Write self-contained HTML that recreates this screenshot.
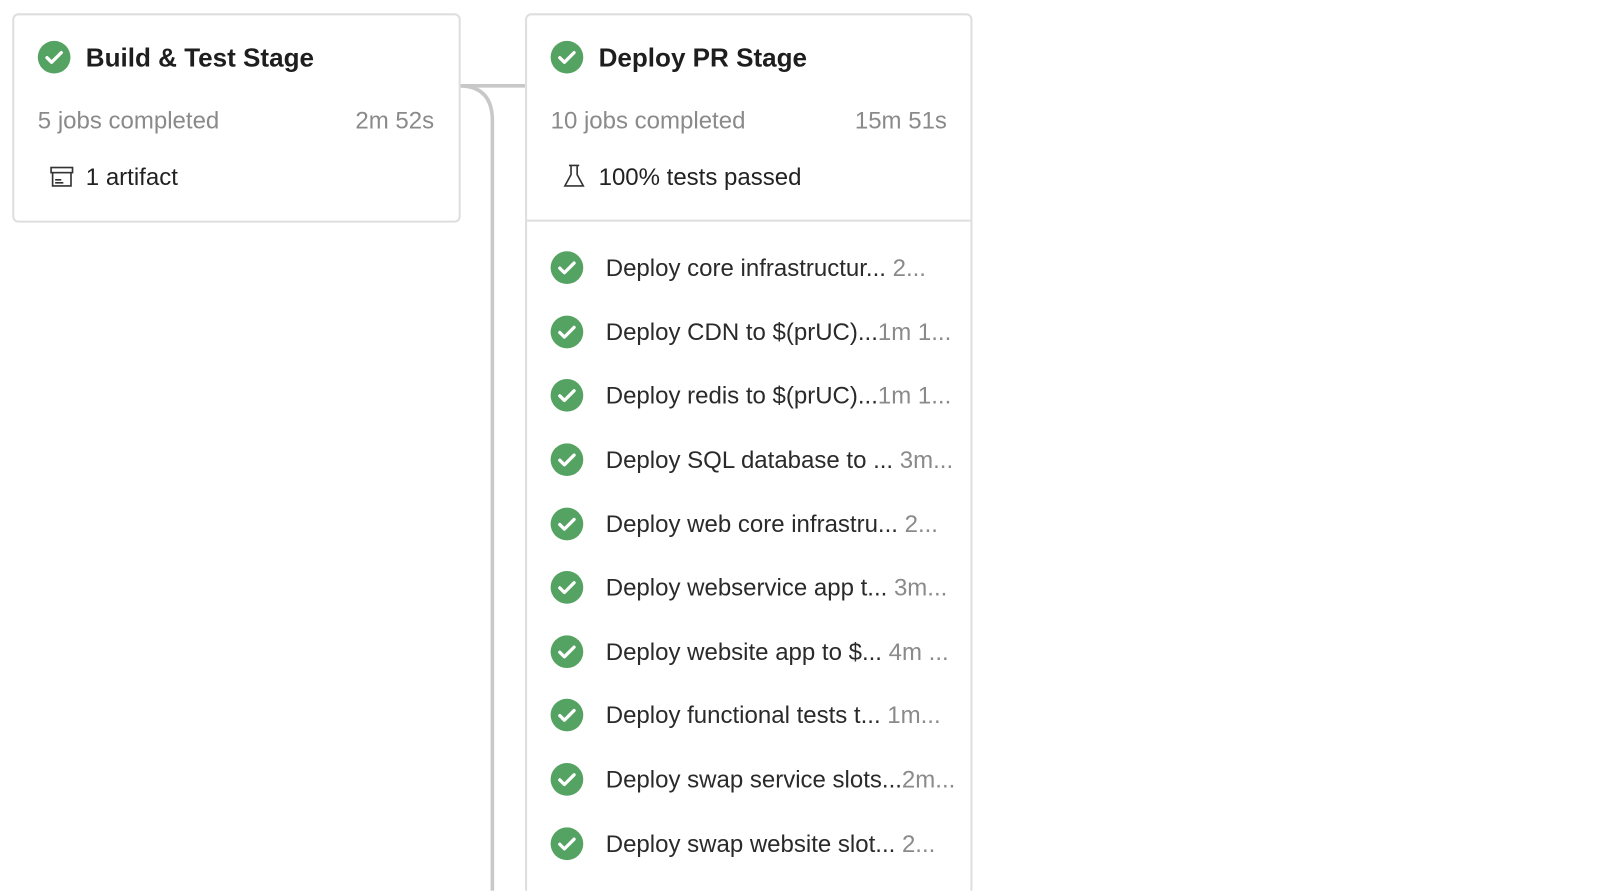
<!DOCTYPE html>
<html style="overflow:hidden;height:891px"><head><meta charset="utf-8"><style>
body{margin:0;width:1600px;height:891px;overflow:hidden;background:#fff;font-family:"Liberation Sans",sans-serif;position:relative}
#w{position:absolute;left:0;top:0;width:1600px;height:872px;overflow:hidden;transform:scale(1.0215);transform-origin:0 0}
.a{position:absolute;white-space:nowrap;line-height:30px}
.card{position:absolute;border:2px solid #dedede;border-radius:6px;box-sizing:border-box;background:#fff}
.t{font-size:25.5px;font-weight:bold;color:#1e1e1e}
.g{font-size:23.5px;color:#8a8a8a}
.d{font-size:23.5px;color:#222}
.j{font-size:23.5px;color:#2a2a2a}
.j span{color:#8a8a8a}
</style></head><body><div id="w">
<svg width="1600" height="872" style="position:absolute;left:0;top:0">
<path d="M449 84 H514" stroke="#c8c8c8" stroke-width="3.5" fill="none"/>
<path d="M449 84 Q482 84 482 118 V872" stroke="#c8c8c8" stroke-width="3.5" fill="none"/>
</svg>
<div class="card" style="left:12px;top:13px;width:439px;height:205px"></div>
<div class="card" style="left:514px;top:13px;width:438px;height:900px"></div>
<div style="position:absolute;left:516px;top:215px;width:434px;height:2px;background:#dedede"></div>

<svg width="1600" height="872" style="position:absolute;left:0;top:0">
<defs><g id="ok"><circle r="16" fill="#55a362"/><path d="M-7 0.5 L-2.5 5 L7 -4.5" stroke="#fff" stroke-width="3.2" fill="none" stroke-linecap="round" stroke-linejoin="round"/></g></defs>
<use href="#ok" x="53" y="56"/>
<use href="#ok" x="555" y="56"/>
<use href="#ok" x="555" y="262"/>
<use href="#ok" x="555" y="325"/>
<use href="#ok" x="555" y="387"/>
<use href="#ok" x="555" y="450"/>
<use href="#ok" x="555" y="513"/>
<use href="#ok" x="555" y="575"/>
<use href="#ok" x="555" y="638"/>
<use href="#ok" x="555" y="700"/>
<use href="#ok" x="555" y="763"/>
<use href="#ok" x="555" y="826"/>
<g fill="none" stroke="#333" stroke-width="1.6">
<rect x="50" y="164" width="21" height="5"/>
<path d="M51.5 169 V182 H69.5 V169"/>
<path d="M54 176 H60 M54 179 H62"/>
<path d="M557 162 H567 M559 162 V171 L553 182 H571 L565 171 V162"/>
</g>
</svg>

<div class="a t" style="left:84px;top:42px">Build &amp; Test Stage</div>
<div class="a g" style="left:37px;top:103px">5 jobs completed</div>
<div class="a g" style="right:1175px;top:103px">2m 52s</div>
<div class="a d" style="left:84px;top:158px">1 artifact</div>

<div class="a t" style="left:586px;top:42px">Deploy PR Stage</div>
<div class="a g" style="left:539px;top:103px">10 jobs completed</div>
<div class="a g" style="right:673px;top:103px">15m 51s</div>
<div class="a d" style="left:586px;top:158px">100% tests passed</div>

<div class="a j" style="left:593px;top:247px">Deploy core infrastructur... <span>2...</span></div>
<div class="a j" style="left:593px;top:310px">Deploy CDN to $(prUC)...<span>1m 1...</span></div>
<div class="a j" style="left:593px;top:372px">Deploy redis to $(prUC)...<span>1m 1...</span></div>
<div class="a j" style="left:593px;top:435px">Deploy SQL database to ... <span>3m...</span></div>
<div class="a j" style="left:593px;top:498px">Deploy web core infrastru... <span>2...</span></div>
<div class="a j" style="left:593px;top:560px">Deploy webservice app t... <span>3m...</span></div>
<div class="a j" style="left:593px;top:623px">Deploy website app to $... <span>4m ...</span></div>
<div class="a j" style="left:593px;top:685px">Deploy functional tests t... <span>1m...</span></div>
<div class="a j" style="left:593px;top:748px">Deploy swap service slots...<span>2m...</span></div>
<div class="a j" style="left:593px;top:811px">Deploy swap website slot... <span>2...</span></div>
</div></body></html>
